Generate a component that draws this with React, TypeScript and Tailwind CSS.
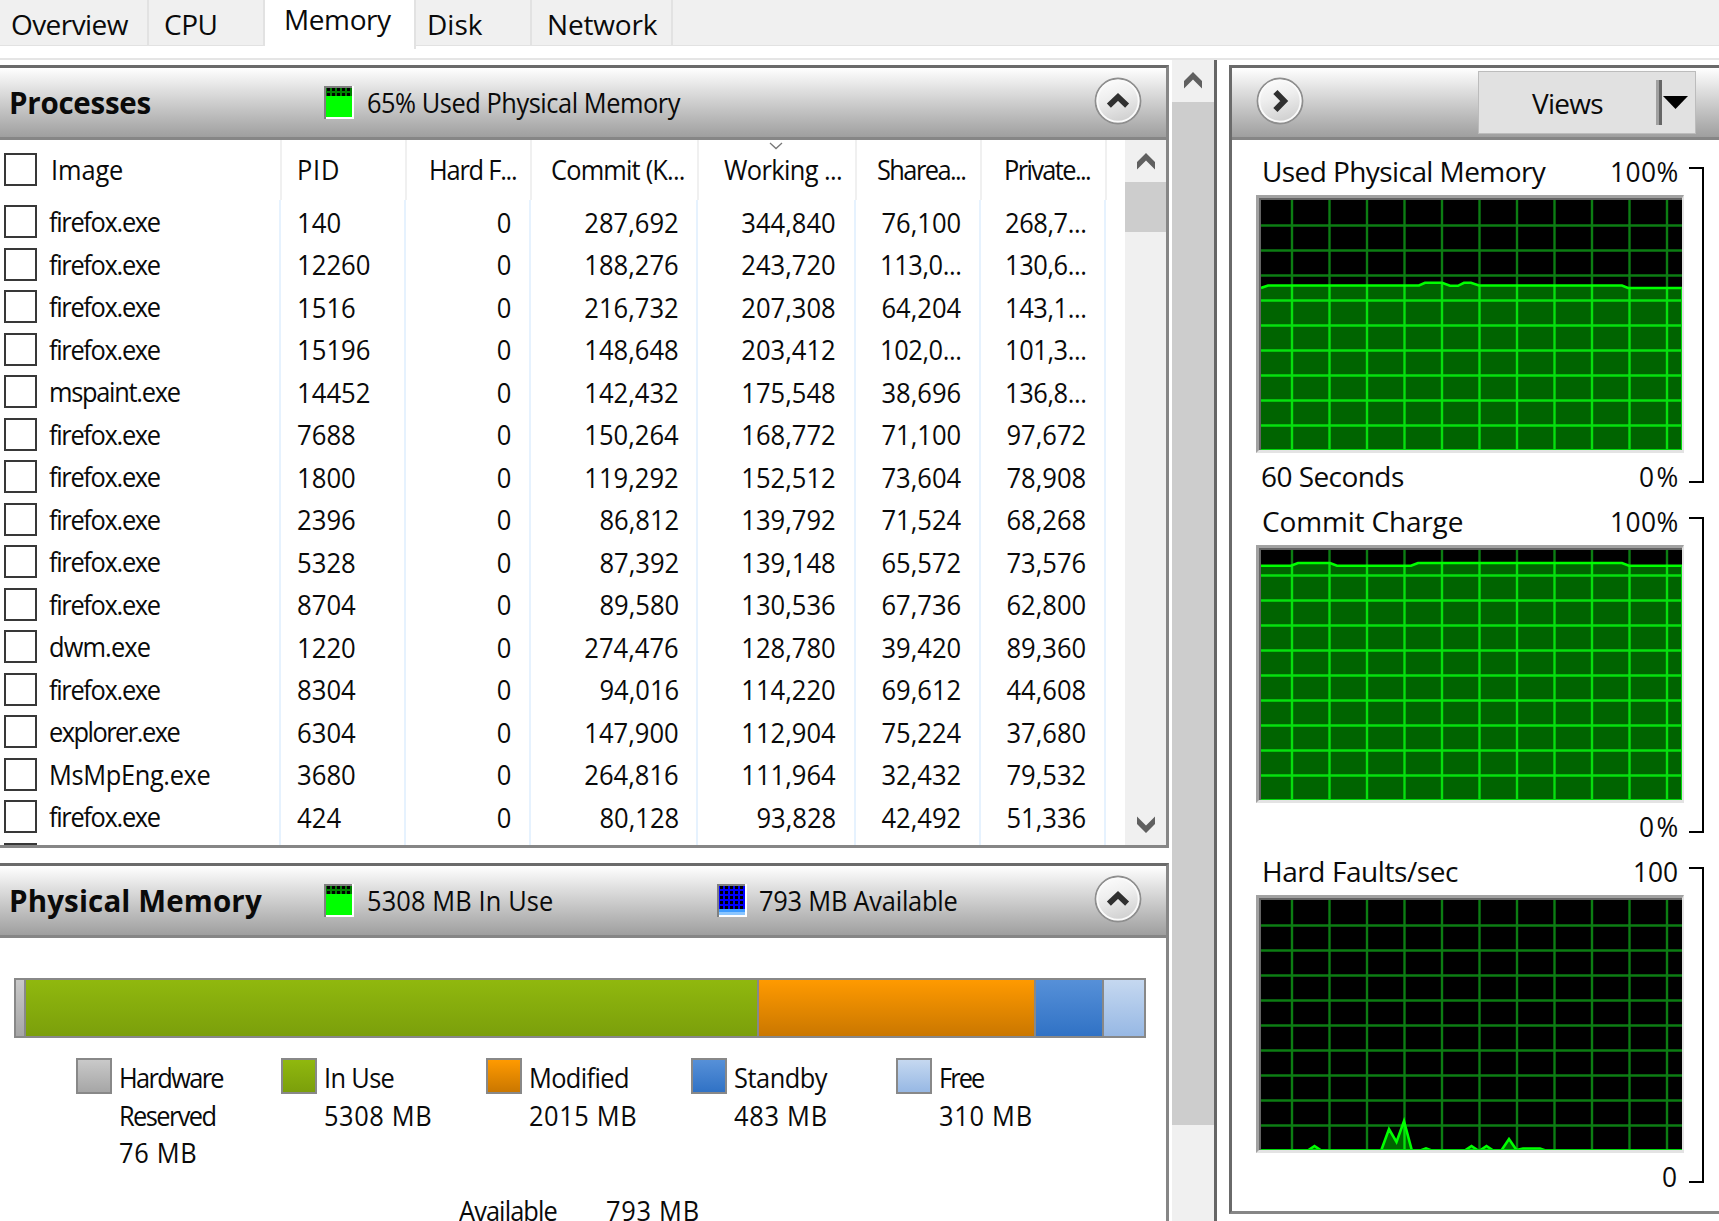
import { useLayoutEffect, useRef } from 'react';
import clsx from 'clsx';

interface TextProps {
  children: string;
  w: number;
  wide?: boolean;
  className?: string;
}

const GLYPH_SCALE = 0.94;

// Narrow UI text: glyphs are condensed a little, tracking takes up the rest of the width
function Text({ children, w, wide = false, className }: TextProps) {
  const ref = useRef<HTMLSpanElement>(null);

  useLayoutEffect(() => {
    const el = ref.current;
    if (!el) return;
    el.style.letterSpacing = '0px';
    const gaps = Math.max(children.length - 1, 1);
    const target = wide ? w : w / GLYPH_SCALE;
    el.style.letterSpacing = `${(target - el.offsetWidth) / gaps}px`;
  }, [children, w, wide]);

  return (
    <span className={clsx('inline-block shrink-0 whitespace-nowrap', className)} style={{ width: w }}>
      <span
        ref={ref}
        className={clsx('inline-block origin-left [font-variant-ligatures:none]', !wide && 'scale-x-[0.94]')}
      >
        {children}
      </span>
    </span>
  );
}

function Num({ children }: { children: string }) {
  if (children.endsWith('...')) return <Text w={82} className="-mr-px">{children}</Text>;
  return <span className="inline-block origin-right scale-x-[0.947]">{children}</span>;
}

const tabs = [
  { label: 'Overview', w: 117, box: 'w-[149px] pl-[11px]' },
  { label: 'CPU', w: 54, box: 'w-[116px] pl-[15px]' },
  { label: 'Memory', w: 107, box: 'w-[151px] pl-[19px]', active: true },
  { label: 'Disk', w: 55, box: 'w-[116px] pl-[11px]' },
  { label: 'Network', w: 110, box: 'w-[141px] pl-[15px]' },
];

const columns = [
  { label: 'Image', w: 72, box: 'pl-[14px]' },
  { label: 'PID', w: 42, box: 'pl-[15px]' },
  { label: 'Hard F...', w: 89, box: 'pl-[22px]' },
  { label: 'Commit (K...', w: 134, box: 'pl-[19px]' },
  { label: 'Working ...', w: 119, box: 'pl-[25px]', sorted: true },
  { label: 'Sharea...', w: 90, box: 'pl-[20px]' },
  { label: 'Private...', w: 88, box: 'pl-[22px]' },
];

const nameWidths: Record<string, number> = {
  'firefox.exe': 112,
  'mspaint.exe': 132,
  'dwm.exe': 102,
  'explorer.exe': 132,
  'MsMpEng.exe': 162,
};

const processes = [
  ['firefox.exe', '140', '0', '287,692', '344,840', '76,100', '268,7...'],
  ['firefox.exe', '12260', '0', '188,276', '243,720', '113,0...', '130,6...'],
  ['firefox.exe', '1516', '0', '216,732', '207,308', '64,204', '143,1...'],
  ['firefox.exe', '15196', '0', '148,648', '203,412', '102,0...', '101,3...'],
  ['mspaint.exe', '14452', '0', '142,432', '175,548', '38,696', '136,8...'],
  ['firefox.exe', '7688', '0', '150,264', '168,772', '71,100', '97,672'],
  ['firefox.exe', '1800', '0', '119,292', '152,512', '73,604', '78,908'],
  ['firefox.exe', '2396', '0', '86,812', '139,792', '71,524', '68,268'],
  ['firefox.exe', '5328', '0', '87,392', '139,148', '65,572', '73,576'],
  ['firefox.exe', '8704', '0', '89,580', '130,536', '67,736', '62,800'],
  ['dwm.exe', '1220', '0', '274,476', '128,780', '39,420', '89,360'],
  ['firefox.exe', '8304', '0', '94,016', '114,220', '69,612', '44,608'],
  ['explorer.exe', '6304', '0', '147,900', '112,904', '75,224', '37,680'],
  ['MsMpEng.exe', '3680', '0', '264,816', '111,964', '32,432', '79,532'],
  ['firefox.exe', '424', '0', '80,128', '93,828', '42,492', '51,336'],
];

const headCols = 'grid grid-cols-[282px_125px_125px_167px_158px_125px_125px_1fr]';
const rowCols = 'grid grid-cols-[281px_125px_125px_167px_158px_125px_125px_1fr]';
const headerBar = 'bg-linear-to-b from-white to-[#9f9f9f] border-b-3 border-[#868686]';

const legend = [
  { lines: [['Hardware', 106], ['Reserved', 98], ['76 MB', 78]], color: 'from-[#c9c9c9] to-[#a6a6a6]' },
  { lines: [['In Use', 71], ['5308 MB', 108]], color: 'from-[#90b80e] to-[#7b9f0b]' },
  { lines: [['Modified', 100], ['2015 MB', 108]], color: 'from-[#ff9a00] to-[#ca7700]' },
  { lines: [['Standby', 94], ['483 MB', 93]], color: 'from-[#5690d8] to-[#3072c5]' },
  { lines: [['Free', 46], ['310 MB', 93]], color: 'from-[#c5d8f0] to-[#97b8e4]' },
] as { lines: [string, number][]; color: string }[];

const graphs = [
  {
    title: 'Used Physical Memory', titleW: 284, max: '100%', maxW: 68, min: '0%', minW: 39, seconds: true,
    line: '0,88 7,85.5 158,85.5 164,82.8 181,82.8 189,85.8 197,85.8 203,82.8 210,82.8 218,85.5 361,85.5 367,88 421,88',
  },
  {
    title: 'Commit Charge', titleW: 201, max: '100%', maxW: 68, min: '0%', minW: 39, seconds: false,
    line: '0,15.8 30,15.8 37,13 69,13 76,15.8 150,15.8 157,13 361,13 368,15.8 421,15.8',
  },
  {
    title: 'Hard Faults/sec', titleW: 196, max: '100', maxW: 45, min: '0', minW: 16, seconds: false,
    line: '0,251 46,251 53.5,246 61,251 120,251 128,229 135.5,242 143,221 151,251 158,251 165,248.5 172,251 203,251 210.5,246 218,251 225.5,246 233,251 240,251 248,239 255.5,250 262,248.5 279,248.5 286,251 421,251',
  },
];

function Checkbox() {
  return <div className="h-[33px] w-[33px] shrink-0 border-2 border-[#383838] bg-white" />;
}

function RoundButton({ right = false }: { right?: boolean }) {
  return (
    <svg width="48" height="48" viewBox="0 0 48 48" className="shrink-0">
      <defs>
        <linearGradient id="knob" x1="0" y1="0" x2="0.3" y2="1">
          <stop offset="0" stopColor="#ffffff" />
          <stop offset="0.5" stopColor="#eeeeee" />
          <stop offset="1" stopColor="#d2d2d2" />
        </linearGradient>
      </defs>
      <circle cx="24" cy="24" r="22.5" fill="url(#knob)" stroke="#8e8e8e" strokeWidth="1.8" />
      <circle cx="24" cy="24" r="20.6" fill="none" stroke="#fafafa" strokeWidth="1.8" />
      <path
        d={right ? 'M19.4 14.9 L28.2 24 L19.4 33.1' : 'M14.9 28.6 L24 20 L33.1 28.6'}
        fill="none"
        stroke="#303030"
        strokeWidth="5.8"
      />
    </svg>
  );
}

function ScrollArrow({ down = false }: { down?: boolean }) {
  return (
    <svg width="18" height="17" viewBox="0 0 18 17" className={clsx(down && 'rotate-180')}>
      <path d="M0 9 L9 0 L18 9 V16.5 L9 7.5 L0 16.5 Z" fill="#606060" />
    </svg>
  );
}

function Meter({ blue = false }: { blue?: boolean }) {
  const rows = blue ? [0, 1, 2, 3, 4] : [0, 1];
  return (
    <svg width="30" height="33" viewBox="0 0 30 33" shapeRendering="crispEdges" className="shrink-0">
      <rect width="30" height="33" fill="#fff" />
      <path d="M0 0 H28 V2 H2 V33 H0 Z" fill="#808080" />
      {blue ? (
        <>
          <rect x="2" y="2" width="26" height="24" fill="#0000ff" />
          <rect x="2" y="25" width="26" height="3" fill="#3f9cff" />
          <rect x="2" y="28" width="26" height="3" fill="#8cc6ff" />
        </>
      ) : (
        <>
          <rect x="2" y="2" width="26" height="9" fill="#008000" />
          <rect x="2" y="10" width="26" height="21" fill="#00ff00" />
        </>
      )}
      {rows.map(r => [0, 1, 2, 3, 4].map(c => (
        <rect key={`${r}-${c}`} x={3 + c * 5} y={2 + r * 5} width="3" height="3" fill="#000" />
      )))}
    </svg>
  );
}

function Graph({ id, line }: { id: number; line: string }) {
  const xs = Array.from({ length: 11 }, (_, i) => 31 + i * 37.5);
  const ys = Array.from({ length: 9 }, (_, i) => 25.5 + i * 25);
  const area = `0,250 ${line} 421,250`;
  const grid = (
    <>
      {xs.map(x => <line key={x} x1={x} x2={x} y1="0" y2="250" />)}
      {ys.map(y => <line key={y} x1="0" x2="421" y1={y} y2={y} />)}
    </>
  );
  return (
    <div className="h-[258px] w-[428px] border-t-3 border-r-2 border-b-3 border-l-3 border-t-[#a2a2a2] border-r-[#e3e3e3] border-b-[#e3e3e3] border-l-[#a2a2a2]">
      <div className="h-[252px] border-t-2 border-l-2 border-[#646464]">
        <svg width="421" height="250" viewBox="0 0 421 250" className="block bg-black">
          <clipPath id={`area-${id}`}><polygon points={area} /></clipPath>
          <g stroke="#0c7d13" strokeWidth="2.4">{grid}</g>
          <g clipPath={`url(#area-${id})`}>
            <rect width="421" height="250" fill="#006400" />
            <g stroke="#06e00e" strokeWidth="2.4">{grid}</g>
          </g>
          <polyline points={line} fill="none" stroke="#00ff00" strokeWidth="2.6" />
          <path d="M0 249.5 H421" stroke="#00d90a" />
          {id < 2 && <path d={id === 0 ? 'M420.5 88 V250' : 'M420.5 16 V250'} stroke="#00d90a" />}
        </svg>
      </div>
    </div>
  );
}

function ProcessList() {
  return (
    <section className="h-[783px] shrink-0 border-t-3 border-r-3 border-b-3 border-[#6a6a6a] border-r-[#868686] border-b-[#868686]">
      <div className={clsx('flex h-[72px] items-center', headerBar)}>
        <div className="w-[324px] pt-px pl-[9px] text-[29.5px] font-bold"><Text wide w={142}>Processes</Text></div>
        <Meter />
        <Text w={313} className="ml-[13px]">65% Used Physical Memory</Text>
        <div className="mr-6 mb-1 ml-auto"><RoundButton /></div>
      </div>
      <div className="flex h-[705px] bg-white">
        <div className="flex w-[1125px] flex-col overflow-hidden">
          <div className={clsx('h-[60px] shrink-0', headCols)}>
            {columns.map((col, i) => (
              <div key={col.label} className="relative flex items-center border-r-2 border-[#f0f0f0] pb-px">
                {i === 0 && <div className="pl-1"><Checkbox /></div>}
                <Text w={col.w} className={clsx('box-content', col.box)}>{col.label}</Text>
                {col.sorted && (
                  <svg width="14" height="8" viewBox="0 0 14 8" className="absolute top-[2px] left-[70px]">
                    <path d="M1 1 L7 6.5 L13 1" fill="none" stroke="#777" strokeWidth="1.3" />
                  </svg>
                )}
              </div>
            ))}
          </div>
          {processes.map(([name, pid, ...nums], i) => (
            <div key={i} className={clsx('h-[42.5px] shrink-0', rowCols)}>
              <div className="flex items-center gap-3 border-r-2 border-[#e6f2fe] pt-px pl-1">
                <Checkbox />
                <Text w={nameWidths[name]}>{name}</Text>
              </div>
              <div className="flex items-center border-r-2 border-[#e6f2fe] pt-[1.5px] pl-4">
                <span className="origin-left scale-x-[0.952]">{pid}</span>
              </div>
              {nums.map((n, c) => (
                <div
                  key={c}
                  className={clsx(
                    'flex items-center justify-end border-r-2 border-[#e6f2fe] pt-[1.5px]',
                    c === 1 ? 'pr-[17px]' : 'pr-[18px]',
                  )}
                >
                  <Num>{n}</Num>
                </div>
              ))}
            </div>
          ))}
          <div className={clsx('h-[42.5px] shrink-0', rowCols)}>
            <div className="border-r-2 border-[#e6f2fe] pt-[5px] pl-1"><Checkbox /></div>
            {[1, 2, 3, 4, 5, 6].map(c => <div key={c} className="border-r-2 border-[#e6f2fe]" />)}
          </div>
        </div>
        <div className="flex grow flex-col items-center bg-[#f0f0f0]">
          <div className="flex h-[42px] shrink-0 items-center justify-center"><ScrollArrow /></div>
          <div className="h-[50px] w-full bg-[#cdcdcd]" />
          <div className="mt-auto flex h-[42px] items-center justify-center"><ScrollArrow down /></div>
        </div>
      </div>
    </section>
  );
}

function PhysicalMemory() {
  const segment = 'bg-linear-to-b border-r-[2.5px] border-[#888]';
  return (
    <section className="mt-[15px] grow overflow-hidden border-t-3 border-r-3 border-[#6a6a6a] border-r-[#868686]">
      <div className={clsx('flex h-[72px] items-center', headerBar)}>
        <div className="w-[324px] pt-px pl-[9px] text-[29.5px] font-bold"><Text wide w={253}>Physical Memory</Text></div>
        <Meter />
        <Text w={186} className="ml-[13px]">5308 MB In Use</Text>
        <div className="ml-[164px]"><Meter blue /></div>
        <Text w={199} className="ml-3">793 MB Available</Text>
        <div className="mr-6 mb-1 ml-auto"><RoundButton /></div>
      </div>
      <div className="mt-10 ml-[14px] flex h-[60px] w-[1132px] border-[2.5px] border-r-0 border-[#888]">
        <div className={clsx('w-[10px]', segment, legend[0].color)} />
        <div className={clsx('w-[733px]', segment, legend[1].color)} />
        <div className={clsx('w-[277px]', segment, legend[2].color)} />
        <div className={clsx('w-[68px]', segment, legend[3].color)} />
        <div className={clsx('grow', segment, legend[4].color)} />
      </div>
      <div className="mt-5 flex h-[143px] pl-[76px]">
        {legend.map(item => (
          <div key={item.color} className="flex w-[205px] gap-[7px]">
            <div className={clsx('h-9 w-9 shrink-0 border-[2.5px] border-[#888] bg-linear-to-b', item.color)} />
            <div className="flex flex-col pt-px leading-[37.5px]">
              {item.lines.map(([line, w]) => <Text key={line} w={w}>{line}</Text>)}
            </div>
          </div>
        ))}
      </div>
      <div className="flex gap-[48px] pl-[459px] leading-[20px]">
        <Text w={99}>Available</Text>
        <Text w={93}>793 MB</Text>
      </div>
    </section>
  );
}

function GraphPanel() {
  return (
    <aside className="ml-3 flex h-[1149px] grow flex-col border-t-3 border-b-3 border-l-3 border-[#6a6a6a] border-b-[#868686]">
      <div className={clsx('flex h-[72px] shrink-0 items-center', headerBar)}>
        <div className="mb-1 ml-6"><RoundButton right /></div>
        <div className="-mt-px ml-[174px] flex h-[63px] w-[218px] items-center border border-[#bcbcbc] bg-[#e1e1e1] text-[28px]">
          <Text wide w={72} className="mt-[2px] ml-[53px]">Views</Text>
          <div className="ml-[52px] h-[45px] w-[6px] border-r-3 border-l-3 border-r-[#666] border-l-[#a0a0a0]" />
          <svg width="25" height="13" viewBox="0 0 25 13" className="ml-[1px]"><path d="M0 0 H25 L12.5 13 Z" /></svg>
        </div>
      </div>
      <div className="pt-[10px] pl-6 text-[28px] leading-[45px]">
        {graphs.map((g, i) => (
          <div key={g.title} className="flex h-[350px]">
            <div className="w-[428px]">
              <div className="-mt-px mb-px flex h-[45px] justify-between pr-[6px] pl-[6px]">
                <Text wide w={g.titleW}>{g.title}</Text>
                <Text w={g.maxW}>{g.max}</Text>
              </div>
              <Graph id={i} line={g.line} />
              <div className="flex h-[47px] items-center pr-[6px] pl-[5px]">
                {g.seconds && <Text wide w={143}>60 Seconds</Text>}
                <Text w={g.minW} className="ml-auto">{g.min}</Text>
              </div>
            </div>
            <div className="mt-[17px] ml-[5px] h-[316px] w-[15px] border-t-2 border-r-2 border-b-2 border-black" />
          </div>
        ))}
      </div>
    </aside>
  );
}

export default function App() {
  return (
    <div className="flex h-[1221px] w-[1719px] flex-col overflow-hidden bg-white font-['Open_Sans',sans-serif] text-[27px] leading-none text-[#0a0a0a]">
      <nav className="flex h-[60px] shrink-0 border-b-2 border-[#e5e5e5] text-[28px]">
        {tabs.map(tab => (
          <div
            key={tab.label}
            className={clsx(
              'flex items-center border-r-2 border-[#e2e2e2]',
              tab.active ? 'h-[49px] pb-3' : 'h-[46px] border-b bg-[#f0f0f0] pt-[2px]',
              tab.box,
            )}
          >
            <Text wide w={tab.w}>{tab.label}</Text>
          </div>
        ))}
        <div className="h-[46px] grow border-b border-[#e2e2e2] bg-[#f0f0f0]" />
      </nav>
      <div className="flex min-h-0 grow">
        <main className="flex w-[1169px] shrink-0 flex-col pt-[5px]">
          <ProcessList />
          <PhysicalMemory />
        </main>
        <div className="ml-[3px] flex w-[45px] shrink-0 flex-col items-center border-r-3 border-[#666] bg-[#f0f0f0]">
          <div className="flex h-[42px] shrink-0 items-center justify-center pb-px"><ScrollArrow /></div>
          <div className="h-[1023px] w-full bg-[#cdcdcd]" />
        </div>
        <div className="flex grow pt-[5px]"><GraphPanel /></div>
      </div>
    </div>
  );
}
